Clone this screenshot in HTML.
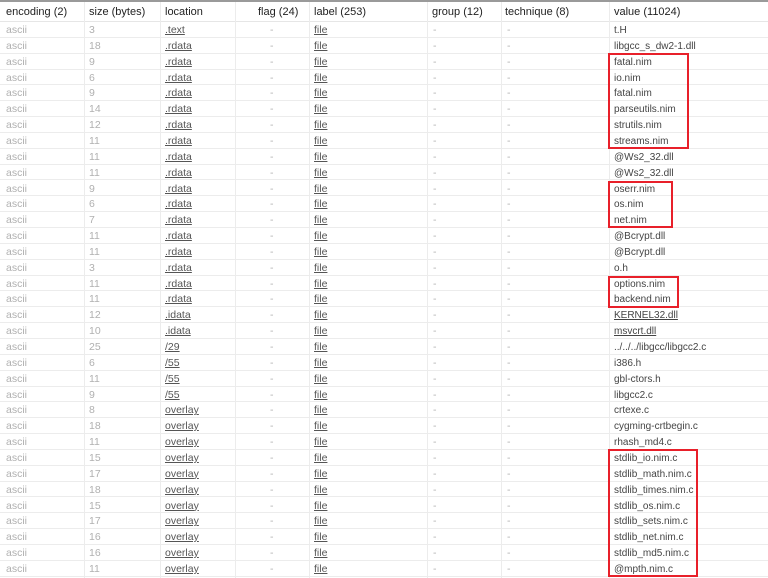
<!DOCTYPE html>
<html><head><meta charset="utf-8"><style>
*{margin:0;padding:0;box-sizing:border-box}
body{width:768px;height:578px;overflow:hidden;background:#fff;font-family:"Liberation Sans",sans-serif;font-size:10.5px;position:relative}
.top{position:absolute;left:0;top:0;width:768px;height:2px;background:#9a9a9a}
.hdr{position:absolute;top:2px;left:0;width:768px;height:20px;border-bottom:1px solid #e6e6e6;color:#222;font-size:11px}
.hdr span{position:absolute;top:4px}
.vl{position:absolute;top:2px;height:576px;width:1px;background:#ececec}
.row{position:absolute;left:0;width:768px;height:15.85px;border-bottom:1px solid #ececec;color:#b0b0b0}
.row span{position:absolute;top:2px;white-space:nowrap}
.c1{left:6px}.c2{left:89px}.c3{left:165px;color:#555;text-decoration:underline}
.c4{left:270px}.c5{left:314px;color:#555;text-decoration:underline}
.c6{left:433px}.c7{left:507px}.row .c8{left:614px;color:#444;font-size:10px;top:3px}
.box{position:absolute;border:2px solid #e8202a}
</style></head><body>
<div class="top"></div>
<div class="hdr">
<span style="left:6px">encoding (2)</span>
<span style="left:89px">size (bytes)</span>
<span style="left:165px">location</span>
<span style="left:258px">flag (24)</span>
<span style="left:314px">label (253)</span>
<span style="left:432px">group (12)</span>
<span style="left:505px">technique (8)</span>
<span style="left:614px">value (11024)</span>
</div>
<div class="vl" style="left:84px"></div>
<div class="vl" style="left:160px"></div>
<div class="vl" style="left:235px"></div>
<div class="vl" style="left:309px"></div>
<div class="vl" style="left:427px"></div>
<div class="vl" style="left:501px"></div>
<div class="vl" style="left:609px"></div>
<div id="rows"></div>
<script>
var d=[["3",".text","t.H"],["18",".rdata","libgcc_s_dw2-1.dll"],["9",".rdata","fatal.nim"],["6",".rdata","io.nim"],["9",".rdata","fatal.nim"],["14",".rdata","parseutils.nim"],["12",".rdata","strutils.nim"],["11",".rdata","streams.nim"],["11",".rdata","@Ws2_32.dll"],["11",".rdata","@Ws2_32.dll"],["9",".rdata","oserr.nim"],["6",".rdata","os.nim"],["7",".rdata","net.nim"],["11",".rdata","@Bcrypt.dll"],["11",".rdata","@Bcrypt.dll"],["3",".rdata","o.h"],["11",".rdata","options.nim"],["11",".rdata","backend.nim"],["12",".idata","<u>KERNEL32.dll</u>"],["10",".idata","<u>msvcrt.dll</u>"],["25","/29","../../../libgcc/libgcc2.c"],["6","/55","i386.h"],["11","/55","gbl-ctors.h"],["9","/55","libgcc2.c"],["8","overlay","crtexe.c"],["18","overlay","cygming-crtbegin.c"],["11","overlay","rhash_md4.c"],["15","overlay","stdlib_io.nim.c"],["17","overlay","stdlib_math.nim.c"],["18","overlay","stdlib_times.nim.c"],["15","overlay","stdlib_os.nim.c"],["17","overlay","stdlib_sets.nim.c"],["16","overlay","stdlib_net.nim.c"],["16","overlay","stdlib_md5.nim.c"],["11","overlay","@mpth.nim.c"]];
var h="";
for(var i=0;i<d.length;i++){var t=22+i*15.85;
h+='<div class="row" style="top:'+t+'px"><span class="c1">ascii</span><span class="c2">'+d[i][0]+'</span><span class="c3">'+d[i][1]+'</span><span class="c4">-</span><span class="c5">file</span><span class="c6">-</span><span class="c7">-</span><span class="c8">'+d[i][2]+'</span></div>';}
document.getElementById("rows").innerHTML=h;
</script>
<div class="box" style="left:608px;top:53px;width:81px;height:96px"></div>
<div class="box" style="left:608px;top:181px;width:65px;height:47px"></div>
<div class="box" style="left:608px;top:276px;width:71px;height:32px"></div>
<div class="box" style="left:608px;top:449px;width:90px;height:128px"></div>
</body></html>
